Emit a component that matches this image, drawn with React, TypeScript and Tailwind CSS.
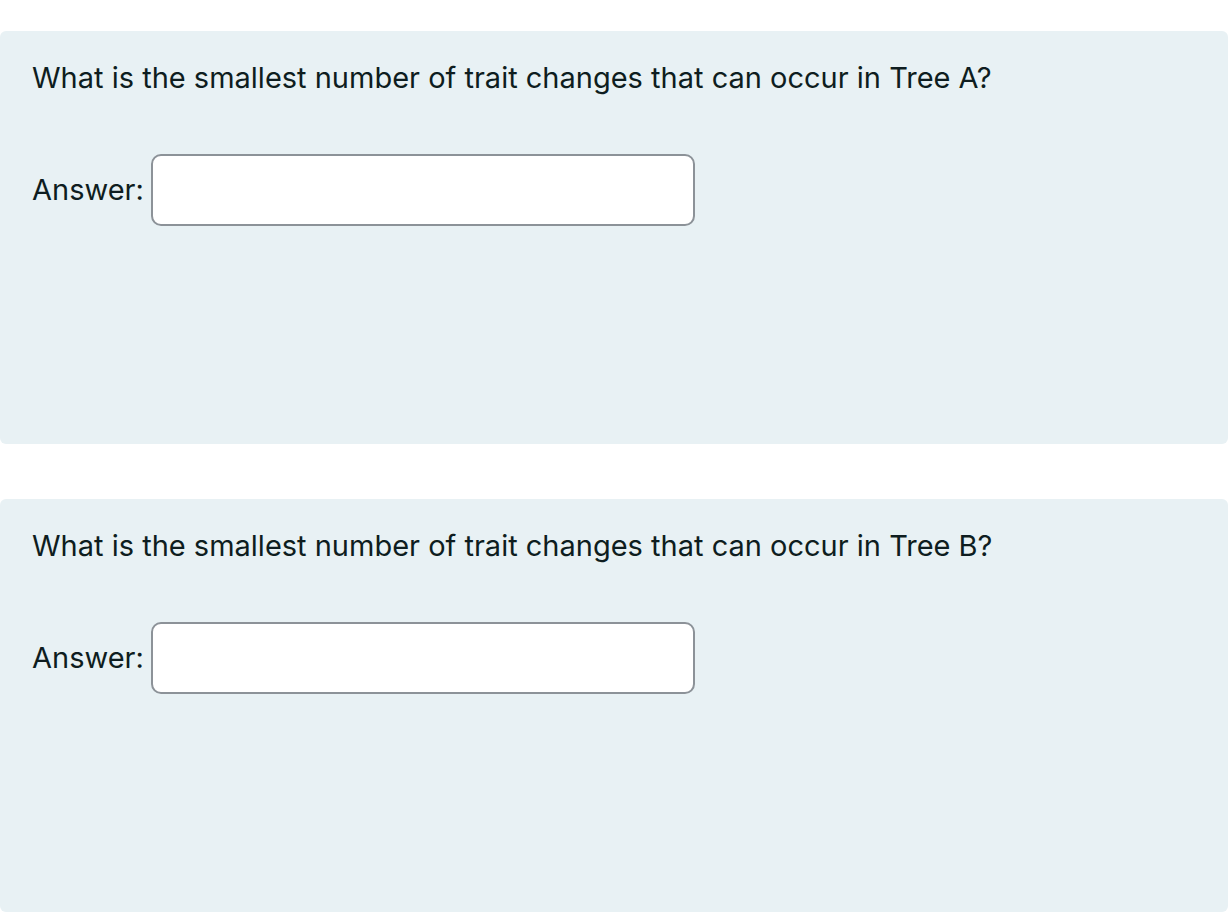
export default function App() {
  const questions = [
    { id: 'a', text: 'What is the smallest number of trait changes that can occur in Tree A?' },
    { id: 'b', text: 'What is the smallest number of trait changes that can occur in Tree B?' },
  ];

  return (
    <div className="min-h-screen bg-white pt-[31px] font-['Inter',sans-serif] text-[#0e1d20]">
      <div className="flex flex-col gap-[55px]">
        {questions.map((q) => (
          <div key={q.id} className="h-[413px] rounded-[6px] bg-[#e8f1f4] px-[32px] pt-[27px]">
            <p className="text-[29px] leading-[40px]">{q.text}</p>
            <div className="mt-[56px] flex items-center gap-[7px]">
              <label htmlFor={`answer-${q.id}`} className="text-[29px] leading-[40px]">
                Answer:
              </label>
              <input
                id={`answer-${q.id}`}
                type="text"
                className="h-[72px] w-[544px] rounded-[10px] border-2 border-[#8c9298] bg-white px-4 text-[26px] outline-none"
              />
            </div>
          </div>
        ))}
      </div>
    </div>
  );
}
